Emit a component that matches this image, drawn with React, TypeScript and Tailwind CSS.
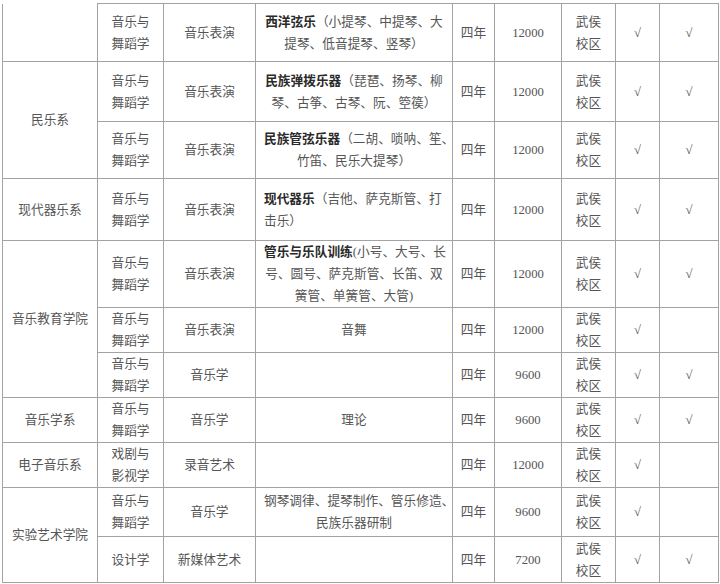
import React from "react";

type Row = {
  h: number;
  dept?: { text: string; span: number } | null;
  subject: React.ReactNode;
  major: React.ReactNode;
  desc: React.ReactNode;
  left?: boolean;
  fee: string;
  a: boolean;
  b: boolean;
};

const B = ({ children }: { children: React.ReactNode }) => (
  <span className="font-bold text-[#2a2a2a]">{children}</span>
);

const music = (
  <>
    音乐与
    <br />
    舞蹈学
  </>
);

const rows: Row[] = [
  {
    h: 58,
    dept: { text: "", span: 1 },
    subject: music,
    major: "音乐表演",
    desc: (
      <>
        <B>西洋弦乐</B>（小提琴、中提琴、大
        <br />
        提琴、低音提琴、竖琴）
      </>
    ),
    fee: "12000",
    a: true,
    b: true,
  },
  {
    h: 60,
    dept: { text: "民乐系", span: 2 },
    subject: music,
    major: "音乐表演",
    desc: (
      <>
        <B>民族弹拨乐器</B>（琵琶、扬琴、柳
        <br />
        琴、古筝、古琴、阮、箜篌）
      </>
    ),
    fee: "12000",
    a: true,
    b: true,
  },
  {
    h: 57,
    dept: null,
    subject: music,
    major: "音乐表演",
    desc: (
      <>
        <B>民族管弦乐器</B>（二胡、唢呐、笙、
        <br />
        竹笛、民乐大提琴）
      </>
    ),
    fee: "12000",
    a: true,
    b: true,
  },
  {
    h: 62,
    dept: { text: "现代器乐系", span: 1 },
    subject: music,
    major: "音乐表演",
    desc: (
      <>
        <B>现代器乐</B>（吉他、萨克斯管、打
        <br />
        击乐）
      </>
    ),
    left: true,
    fee: "12000",
    a: true,
    b: true,
  },
  {
    h: 67,
    dept: { text: "音乐教育学院", span: 3 },
    subject: music,
    major: "音乐表演",
    desc: (
      <>
        <B>管乐与乐队训练</B>(小号、大号、长
        <br />
        号、圆号、萨克斯管、长笛、双
        <br />
        簧管、单簧管、大管)
      </>
    ),
    fee: "12000",
    a: true,
    b: true,
  },
  { h: 45, dept: null, subject: music, major: "音乐表演", desc: "音舞", fee: "12000", a: true, b: false },
  { h: 45, dept: null, subject: music, major: "音乐学", desc: "", fee: "9600", a: true, b: true },
  {
    h: 45,
    dept: { text: "音乐学系", span: 1 },
    subject: music,
    major: "音乐学",
    desc: "理论",
    fee: "9600",
    a: true,
    b: true,
  },
  {
    h: 45,
    dept: { text: "电子音乐系", span: 1 },
    subject: (
      <>
        戏剧与
        <br />
        影视学
      </>
    ),
    major: "录音艺术",
    desc: "",
    fee: "12000",
    a: true,
    b: false,
  },
  {
    h: 49,
    dept: { text: "实验艺术学院", span: 2 },
    subject: music,
    major: "音乐学",
    desc: (
      <>
        钢琴调律、提琴制作、管乐修造、
        <br />
        民族乐器研制
      </>
    ),
    fee: "9600",
    a: true,
    b: false,
  },
  { h: 46, dept: null, subject: "设计学", major: "新媒体艺术", desc: "", fee: "7200", a: true, b: true },
];

const cell = "border border-[#a3a3a3] px-[4px] py-0 align-middle text-center";

export default function App() {
  return (
    <div
      className="w-[720px] h-[584px] bg-white overflow-hidden pt-[3px] pl-[2px] text-[12.7px] leading-[22px] text-[#555]"
      style={{ fontFamily: '"Liberation Serif", "Noto Sans CJK SC", serif' }}
    >
      <table className="table-fixed border-collapse w-[716px]">
        <colgroup>
          <col className="w-[95px]" />
          <col className="w-[66px]" />
          <col className="w-[92px]" />
          <col className="w-[197px]" />
          <col className="w-[42px]" />
          <col className="w-[67px]" />
          <col className="w-[54px]" />
          <col className="w-[44px]" />
          <col className="w-[59px]" />
        </colgroup>
        <tbody>
          {rows.map((r, i) => (
            <tr key={i} style={{ height: r.h }}>
              {r.dept && (
                <td
                  rowSpan={r.dept.span}
                  className={`${cell} ${i === 0 ? "border-t-0" : ""}`}
                >
                  {r.dept.text}
                </td>
              )}
              <td className={cell}>{r.subject}</td>
              <td className={cell}>{r.major}</td>
              <td
                className={`${cell} whitespace-nowrap !px-[8px] ${
                  r.left ? "!text-left" : ""
                }`}
              >
                {r.desc}
              </td>
              <td className={cell}>四年</td>
              <td className={cell}>{r.fee}</td>
              <td className={cell}>
                武侯
                <br />
                校区
              </td>
              <td className={cell}>{r.a ? "√" : ""}</td>
              <td className={cell}>{r.b ? "√" : ""}</td>
            </tr>
          ))}
        </tbody>
      </table>
    </div>
  );
}
